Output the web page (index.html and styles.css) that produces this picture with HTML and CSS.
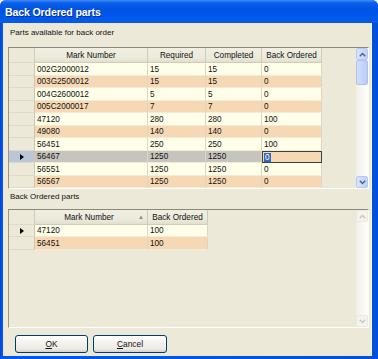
FILE: index.html
```html
<!DOCTYPE html>
<html>
<head>
<meta charset="utf-8">
<link rel="stylesheet" href="styles.css">
</head>
<body>
<div class="window">
  <div class="titlebar"><span class="title">Back Ordered parts</span></div>
  <div class="client">
    <div class="label label-top">Parts available for back order</div>
    <div class="grid grid-top">
      <div class="grid-body">
        <div class="row header cols5">
          <div class="cell rh hrh"></div>
          <div class="cell hcell">Mark Number</div>
          <div class="cell hcell">Required</div>
          <div class="cell hcell">Completed</div>
          <div class="cell hcell">Back Ordered</div>
        </div>
        <div class="row cols5 light h13"><div class="cell rh"></div><div class="cell">002G2000012</div><div class="cell">15</div><div class="cell">15</div><div class="cell">0</div></div>
        <div class="row cols5 tan h12"><div class="cell rh"></div><div class="cell">003G2500012</div><div class="cell">15</div><div class="cell">15</div><div class="cell">0</div></div>
        <div class="row cols5 light h13"><div class="cell rh"></div><div class="cell">004G2600012</div><div class="cell">5</div><div class="cell">5</div><div class="cell">0</div></div>
        <div class="row cols5 tan h12"><div class="cell rh"></div><div class="cell">005C2000017</div><div class="cell">7</div><div class="cell">7</div><div class="cell">0</div></div>
        <div class="row cols5 light h13"><div class="cell rh"></div><div class="cell">47120</div><div class="cell">280</div><div class="cell">280</div><div class="cell">100</div></div>
        <div class="row cols5 tan h12"><div class="cell rh"></div><div class="cell">49080</div><div class="cell">140</div><div class="cell">140</div><div class="cell">0</div></div>
        <div class="row cols5 light h13"><div class="cell rh"></div><div class="cell">56451</div><div class="cell">250</div><div class="cell">250</div><div class="cell">100</div></div>
        <div class="row cols5 selected h12"><div class="cell rh rh-active"><span class="arrow"></span></div><div class="cell">56467</div><div class="cell">1250</div><div class="cell">1250</div><div class="cell editing"><span class="sel">0</span></div></div>
        <div class="row cols5 light h13"><div class="cell rh"></div><div class="cell">56551</div><div class="cell">1250</div><div class="cell">1250</div><div class="cell">0</div></div>
        <div class="row cols5 tan h12"><div class="cell rh"></div><div class="cell">56567</div><div class="cell">1250</div><div class="cell">1250</div><div class="cell">0</div></div>
      </div>
      <div class="vscroll">
        <div class="sb-btn"><svg width="7" height="5" viewBox="0 0 7 5"><path d="M0.8 4.2 L3.5 1.4 L6.2 4.2" fill="none" stroke="#4D6185" stroke-width="1.4"/></svg></div>
        <div class="sb-thumb"></div>
        <div class="sb-track"></div>
        <div class="sb-btn"><svg width="7" height="5" viewBox="0 0 7 5"><path d="M0.8 0.8 L3.5 3.6 L6.2 0.8" fill="none" stroke="#4D6185" stroke-width="1.4"/></svg></div>
      </div>
    </div>
    <div class="label label-bottom">Back Ordered parts</div>
    <div class="grid grid-bottom">
      <div class="grid-body">
        <div class="row header cols3">
          <div class="cell rh hrh"></div>
          <div class="cell hcell sorted">Mark Number<span class="sort">&#9650;</span></div>
          <div class="cell hcell">Back Ordered</div>
        </div>
        <div class="row cols3 light h12"><div class="cell rh"><span class="arrow"></span></div><div class="cell">47120</div><div class="cell">100</div></div>
        <div class="row cols3 tan h13"><div class="cell rh"></div><div class="cell">56451</div><div class="cell">100</div></div>
      </div>
      <div class="vscroll disabled">
        <div class="sb-btn"><svg width="7" height="5" viewBox="0 0 7 5"><path d="M0.8 4.2 L3.5 1.4 L6.2 4.2" fill="none" stroke="#C9C7BA" stroke-width="1.4"/></svg></div>
        <div class="sb-track"></div>
        <div class="sb-btn"><svg width="7" height="5" viewBox="0 0 7 5"><path d="M0.8 0.8 L3.5 3.6 L6.2 0.8" fill="none" stroke="#C9C7BA" stroke-width="1.4"/></svg></div>
      </div>
    </div>
    <div class="buttons">
      <button class="btn btn-ok"><u>O</u>K</button>
      <button class="btn btn-cancel"><u>C</u>ancel</button>
    </div>
  </div>
</div>
</body>
</html>
```
FILE: styles.css
```css
html, body {
  margin: 0;
  padding: 0;
  background: #ffffff;
}
body {
  font-family: "Liberation Sans", Arial, sans-serif;
  font-size: 8.2px;
  color: #111111;
}
.window {
  width: 378px;
  height: 359px;
  box-sizing: border-box;
  background: linear-gradient(to right, #0A3ED0 0, #0058EE 2px, #0055E5 50%, #0050DC 100%);
  border-radius: 6px 6px 0 0;
  display: flex;
  flex-direction: column;
  overflow: hidden;
}
.titlebar {
  height: 23px;
  flex: none;
  background: linear-gradient(to bottom, #3F8CF3 0, #0A5FEA 3px, #0054E3 9px, #0058EE 18px, #0A5BE0 23px);
  display: flex;
  align-items: center;
  padding-left: 5px;
  padding-top: 1px;
  box-sizing: border-box;
}
.title {
  color: #ffffff;
  font-weight: bold;
  font-size: 10.6px;
  letter-spacing: -0.15px;
  text-shadow: 1px 1px 0 #0B2A9A;
}
.client {
  margin: 0 6px 3px 3px;
  height: 333px;
  background: #ECE9D8;
  display: flex;
  flex-direction: column;
  box-sizing: border-box;
  padding-top: 5px;
  border-right: 1px solid #F8F7F0;
}
.label {
  height: 10px;
  line-height: 10px;
  padding-left: 7px;
  font-size: 8px;
}
.label-top { margin-bottom: 9px; }
.label-bottom { margin-top: 3px; margin-bottom: 7px; }

.grid {
  margin-left: 5px;
  width: 361px;
  box-sizing: border-box;
  border-top: 1px solid #8B8878;
  border-left: 1px solid #9A9786;
  border-right: 1px solid #FDFDFB;
  border-bottom: 1px solid #FDFDFB;
  display: flex;
  background: #ECE9D8;
}
.grid-top { height: 142px; }
.grid-bottom { height: 119px; }
.grid-body {
  flex: 1;
  display: flex;
  flex-direction: column;
}
.row {
  display: grid;
  box-sizing: border-box;
}
.cols5 { grid-template-columns: 26px 113px 58px 56px 60px; }
.cols3 { grid-template-columns: 26px 113px 60px; }
.header { height: 15px; }
.h12 { height: 12px; }
.h13 { height: 13px; }
.cell {
  box-sizing: border-box;
  border-right: 1px solid #DCD6C4;
  border-bottom: 1px solid #F3EBD8;
  padding-left: 2px;
  display: flex;
  align-items: center;
  white-space: nowrap;
  overflow: hidden;
  position: relative;
}
.light .cell { background: #FFFEE8; }
.tan .cell { background: #F6D9B4; }
.selected .cell { background: #C6C4BF; }
.row .cell.rh {
  background: #ECE9D8;
  border-right: 1px solid #CBC7B4;
  border-bottom: 1px solid #DEDACB;
  padding-left: 0;
  justify-content: center;
}
.row .cell.rh-active { background: #BCC6D9; }
.arrow {
  width: 0;
  height: 0;
  border-top: 3.5px solid transparent;
  border-bottom: 3.5px solid transparent;
  border-left: 4px solid #000000;
  margin-left: 1px;
}
.header .cell {
  background: linear-gradient(to bottom, #F1EFE2 0, #EBEADB 70%, #E2DFCE 100%);
  border-bottom: 1px solid #D0CCB9;
  border-right: 1px solid #CFCBB8;
  justify-content: center;
  padding-left: 0;
}
.header .cell.hrh { border-right: 1px solid #CFCBB8; }
.sorted { padding-right: 4px; }
.sort {
  position: absolute;
  right: 3px;
  top: 4px;
  font-size: 6px;
  color: #8E8B7D;
}
.selected .cell.editing {
  background: #F6D9B4;
  border: 1px solid #3F3F3F;
  padding-left: 1px;
}
.sel {
  background: #3168C6;
  color: #FFFFFF;
  padding: 0 1px;
  line-height: 9px;
}
.vscroll {
  width: 12px;
  flex: none;
  display: flex;
  flex-direction: column;
  background: linear-gradient(to right, #F1EFE6, #FEFEFB);
}
.sb-btn {
  height: 12px;
  box-sizing: border-box;
  border: 1px solid #B6C9F5;
  border-radius: 2px;
  background: linear-gradient(to right, #DAE4FD, #BFD0FA);
  display: flex;
  align-items: center;
  justify-content: center;
  flex: none;
}
.sb-thumb {
  height: 25px;
  flex: none;
  box-sizing: border-box;
  border: 1px solid #ADC2F4;
  border-radius: 2px;
  background: linear-gradient(to right, #D2DEFC, #B9CCF9);
}
.sb-track { flex: 1; }
.disabled .sb-btn {
  border: 1px solid #EAE8E0;
  background: #F4F3EE;
}
.buttons {
  margin-top: 7px;
  display: flex;
  gap: 5px;
  padding-left: 12px;
}
.btn {
  height: 18px;
  box-sizing: border-box;
  border: 1px solid #003C74;
  border-radius: 3px;
  background: linear-gradient(to bottom, #FFFFFF 0, #F4F3EE 40%, #ECEBE6 80%, #D8D2C6 100%);
  font-family: "Liberation Sans", Arial, sans-serif;
  font-size: 8.4px;
  color: #111111;
  padding: 0;
  margin: 0;
}
.btn-ok { width: 73px; }
.btn-cancel { width: 74px; }
```
